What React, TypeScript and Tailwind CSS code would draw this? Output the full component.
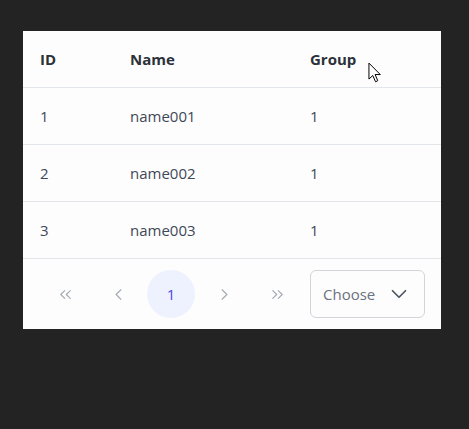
import { ChevronDown, ChevronLeft, ChevronRight, ChevronsLeft, ChevronsRight } from "lucide-react";

const rows = [
  { id: 1, name: "name001", group: 1 },
  { id: 2, name: "name002", group: 1 },
  { id: 3, name: "name003", group: 1 },
];

const PageButton = ({ children, active }: { children: React.ReactNode; active?: boolean }) => (
  <button
    className={
      "w-12 h-12 rounded-full flex items-center justify-center text-[15px] " +
      (active ? "bg-[#eef2ff] text-[#4f46e5]" : "text-[#a3a9b3]")
    }>
    {children}
  </button>
);

const App = () => {
  return (
    <div
      className="w-[469px] h-[429px] bg-[#232323] pt-[31px] pl-[23px] relative"
      style={{ fontFamily: '"Open Sans", "Noto Sans", sans-serif' }}>
      <div className="w-[418px] bg-[#fdfdfd]">
        <div className="grid grid-cols-[90px_180px_1fr] px-[17px] h-[57px] items-center border-b border-[#e2e5ea] text-[15px] font-bold text-[#2d3139]">
          <div>ID</div>
          <div>Name</div>
          <div>Group</div>
        </div>
        {rows.map(row => (
          <div
            key={row.id}
            className="grid grid-cols-[90px_180px_1fr] px-[17px] h-[57px] items-center border-b border-[#e2e5ea] text-[15px] text-[#3f4858]">
            <div>{row.id}</div>
            <div>{row.name}</div>
            <div>{row.group}</div>
          </div>
        ))}
        <div className="flex items-center h-[70px] pl-[18px] pr-[16px]">
          <div className="flex items-center gap-[5px]">
            <PageButton>
              <ChevronsLeft size={19} strokeWidth={1.4} />
            </PageButton>
            <PageButton>
              <ChevronLeft size={19} strokeWidth={1.4} />
            </PageButton>
            <PageButton active>1</PageButton>
            <PageButton>
              <ChevronRight size={19} strokeWidth={1.4} />
            </PageButton>
            <PageButton>
              <ChevronsRight size={19} strokeWidth={1.4} />
            </PageButton>
          </div>
          <div className="ml-auto w-[115px] h-12 border border-[#d1d5db] rounded-md flex items-center justify-between pl-[12px] pr-[12px]">
            <span className="text-[15px] text-[#6b7280]">Choose</span>
            <ChevronDown size={26} strokeWidth={1.6} className="text-[#4b5563]" />
          </div>
        </div>
      </div>
      <svg
        className="absolute left-[367px] top-[62px]"
        width="16"
        height="22"
        viewBox="0 0 13 20">
        <path
          d="M1 1 L1 15.5 L4.5 12.3 L7 18 L9 17 L6.6 11.4 L11.3 11.4 Z"
          fill="#fff"
          stroke="#000"
          strokeWidth="0.9"
          strokeLinejoin="round"
        />
      </svg>
    </div>
  );
};

export default App;
